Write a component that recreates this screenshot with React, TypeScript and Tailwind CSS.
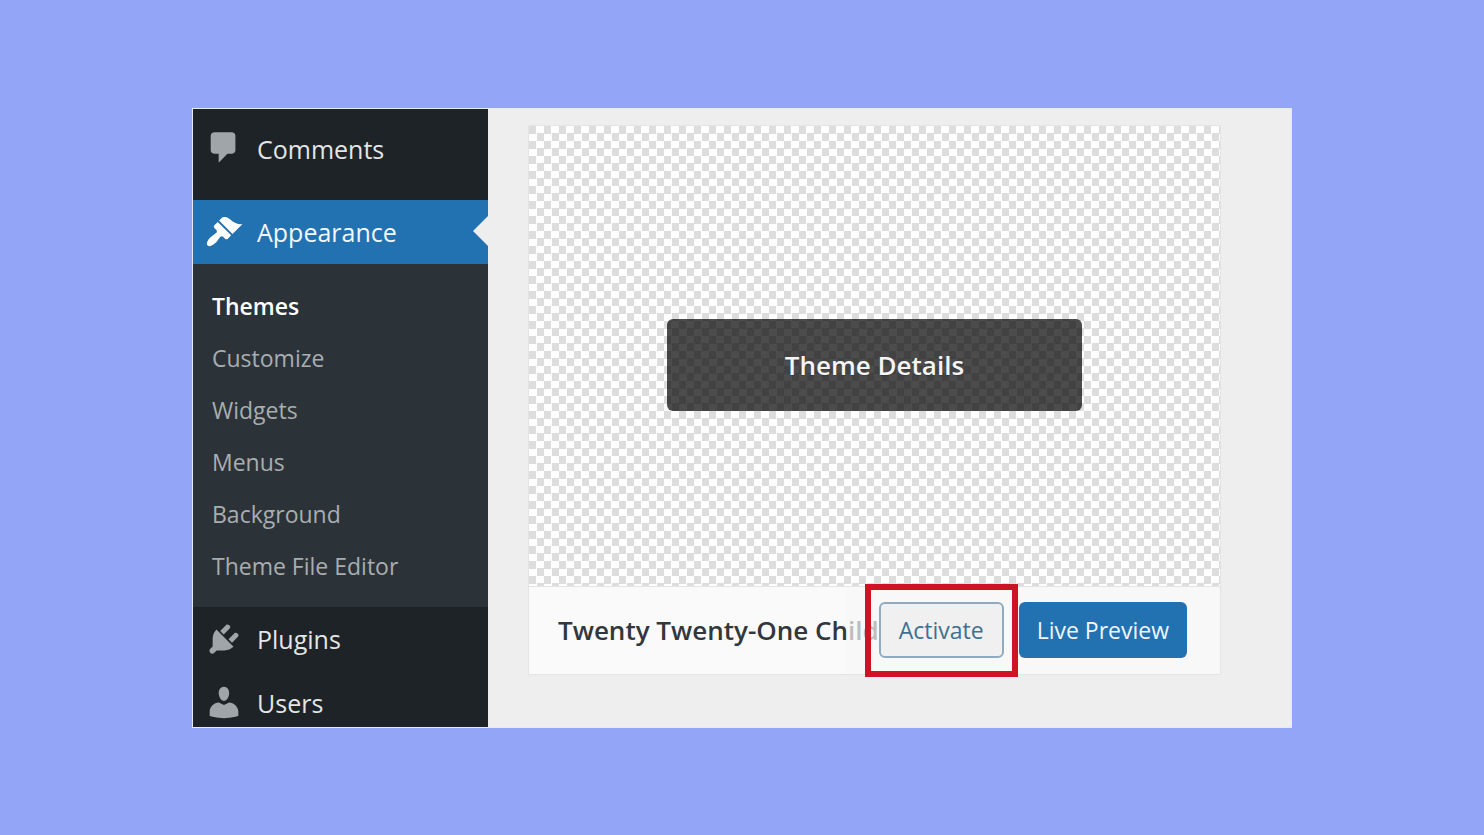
import type { ReactNode } from 'react';

type MenuItemProps = {
  label: string;
  icon: string;
  active?: boolean;
  children?: ReactNode;
};

const icons = {
  comments:
    'M5 1.2h9c1.1 0 2 .7 2 1.8v7.6c0 1.1-.9 1.9-2 1.9h-2.2L7.2 17.2v-4.7H5c-1.1 0-2-.8-2-1.9V3c0-1.1.9-1.8 2-1.8z',
  appearance:
    'M14.48 11.06L7.41 3.99l1.5-1.5c.5-.56 2.3-.47 3.51.32 1.21.8 1.43 1.28 2.91 2.1 1.18.64 2.45 1.26 4.45.85zm-.71.71L6.7 4.7 4.93 6.47c-.39.39-.39 1.02 0 1.41l1.06 1.06c.39.39.39 1.03 0 1.42-.6.6-1.43 1.11-2.21 1.69-.35.26-.7.53-1.01.84C1.43 14.23.4 16.08 1.4 17.07c.99 1 2.84-.03 4.18-1.36.31-.31.58-.66.85-1.02.57-.78 1.08-1.61 1.69-2.21.39-.39 1.02-.39 1.41 0l1.06 1.06c.39.39 1.02.39 1.41 0z',
  plugins:
    'M13.11 4.36L9.87 7.6 8 5.73l3.24-3.24c.35-.34 1.05-.2 1.56.32.52.51.66 1.21.31 1.55zm-8 1.77l.91-1.12 9.01 9.01-1.19.84c-.71.71-2.63 1.16-3.82 1.16H6.14L4.9 17.26c-.59.59-1.54.59-2.12 0-.59-.58-.59-1.53 0-2.12l1.24-1.24v-3.88c0-1.13.4-3.19 1.09-3.89zm7.26 3.97l3.24-3.24c.34-.35 1.04-.21 1.55.31.52.51.66 1.21.31 1.55l-3.24 3.25z',
  users:
    'M10 8.9c-2.27 0-2.73-3.44-2.73-3.44C7 3.67 7.82 1.5 9.97 1.5c2.16 0 2.98 2.17 2.71 3.96 0 0-.41 3.44-2.68 3.44zm0 2.2L12.72 9.7c2.39 0 4.82 2.4 4.82 4.8v2.4s-3.95 1.13-7.54 1.13c-3.65 0-7.54-1.13-7.54-1.13v-2.4c0-2.4 2.24-4.8 4.77-4.8z',
};

const appearanceLinks = ['Themes', 'Customize', 'Widgets', 'Menus', 'Background', 'Theme File Editor'];

function MenuItem({ label, icon, active, children }: MenuItemProps) {
  return (
    <li>
      <a
        href="#"
        className={`relative flex h-16 items-center gap-3.5 pl-3 text-[25px] leading-8 ${
          active ? 'bg-[#2271b1] text-[#f3f7fa]' : 'text-[#e4e5e5]'
        }`}
      >
        <svg
          viewBox="0 0 20 20"
          className={`size-[38px] shrink-0 ${active ? 'fill-white' : 'fill-[#a0a5aa]'}`}
          aria-hidden="true"
        >
          <path d={icon} />
        </svg>
        {label}
        {active && (
          <span className="absolute top-4 right-0 border-y-[15px] border-r-[15px] border-y-transparent border-r-[#eeeeee]" />
        )}
      </a>
      {children}
    </li>
  );
}

function Sidebar() {
  return (
    <nav className="w-[295px] shrink-0 bg-[#1d2327] pt-2">
      <ul>
        <MenuItem label="Comments" icon={icons.comments} />
        <li className="h-[19px]" aria-hidden="true" />
        <MenuItem label="Appearance" icon={icons.appearance} active>
          <ul className="bg-[#2c3338] pt-4 pb-[15px]">
            {appearanceLinks.map((link) => (
              <li key={link}>
                <a
                  href="#"
                  className={`flex h-[52px] items-center pl-[19px] text-[23px] leading-8 ${
                    link === 'Themes' ? 'font-semibold text-white' : 'text-[#a9adb0]'
                  }`}
                >
                  {link}
                </a>
              </li>
            ))}
          </ul>
        </MenuItem>
        <MenuItem label="Plugins" icon={icons.plugins} />
        <MenuItem label="Users" icon={icons.users} />
      </ul>
    </nav>
  );
}

function ThemeCard() {
  return (
    <article className="border border-[#e4e4e4]">
      {/* Empty screenshot */}
      <div className="relative aspect-3/2 bg-[repeating-conic-gradient(#ffffff_0_25%,#dddddd_0_50%)] bg-size-[15px_15px]">
        <button
          type="button"
          className="absolute top-[42%] left-1/5 h-[92px] w-3/5 rounded-md bg-black/70 text-[26px] leading-8 font-semibold text-[#f5f5f5] text-shadow-xs"
        >
          Theme Details
        </button>
      </div>

      <div className="relative flex h-[88px] items-center border-t border-[#e4e4e4] bg-[#fafafa] pb-0.5 pl-[29px]">
        <h2 className="text-[26px] leading-8 font-semibold whitespace-nowrap text-[#32373c]">
          Twenty Twenty-One Child
        </h2>
        {/* Actions slide over the end of the name */}
        <div className="absolute inset-y-0 right-0 flex items-center gap-[15px] bg-[#f7f7f7]/70 pr-[33px] pb-0.5 pl-8">
          <div className="relative">
            <button
              type="button"
              className="h-14 rounded-md border-2 border-[#8eabc0] bg-[#f0f0f0] px-[18px] text-[23px] leading-8 text-[#40708f]"
            >
              Activate
            </button>
            <span className="pointer-events-none absolute -inset-x-3.5 -top-[18px] -bottom-[19px] border-6 border-[#cc1426]" />
          </div>
          <button
            type="button"
            className="h-14 rounded-md bg-[#2271b1] px-[18px] text-[23px] leading-8 text-[#f0f6fb]"
          >
            Live Preview
          </button>
        </div>
      </div>
    </article>
  );
}

export default function App() {
  return (
    <div className="flex min-h-screen items-center justify-center bg-[#93a5f7] font-['Open_Sans','Noto_Sans',sans-serif]">
      <div className="flex max-h-[620px] w-full max-w-[1100px] overflow-hidden border border-[#e6e9f5] bg-[#eeeeee]">
        <Sidebar />
        <main className="min-w-0 flex-1 pt-4 pr-[70px] pl-10">
          <ThemeCard />
        </main>
      </div>
    </div>
  );
}
